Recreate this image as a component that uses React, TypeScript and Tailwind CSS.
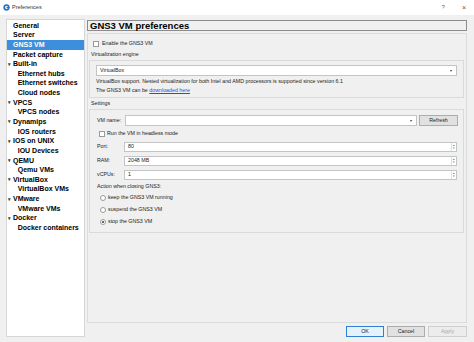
import React from "react";

const font = { fontFamily: '"Liberation Sans", Arial, sans-serif' };

type TreeItem = { label: string; level: 0 | 1; parent?: boolean; selected?: boolean };

const tree: TreeItem[] = [
  { label: "General", level: 0 },
  { label: "Server", level: 0 },
  { label: "GNS3 VM", level: 0, selected: true },
  { label: "Packet capture", level: 0 },
  { label: "Built-in", level: 0, parent: true },
  { label: "Ethernet hubs", level: 1 },
  { label: "Ethernet switches", level: 1 },
  { label: "Cloud nodes", level: 1 },
  { label: "VPCS", level: 0, parent: true },
  { label: "VPCS nodes", level: 1 },
  { label: "Dynamips", level: 0, parent: true },
  { label: "IOS routers", level: 1 },
  { label: "IOS on UNIX", level: 0, parent: true },
  { label: "IOU Devices", level: 1 },
  { label: "QEMU", level: 0, parent: true },
  { label: "Qemu VMs", level: 1 },
  { label: "VirtualBox", level: 0, parent: true },
  { label: "VirtualBox VMs", level: 1 },
  { label: "VMware", level: 0, parent: true },
  { label: "VMware VMs", level: 1 },
  { label: "Docker", level: 0, parent: true },
  { label: "Docker containers", level: 1 },
];

const Checkbox = () => (
  <span className="w-[6px] h-[6px] border border-[#9a9a9a] bg-white shrink-0" />
);

const Radio = ({ checked }: { checked?: boolean }) => (
  <span className="w-[6px] h-[6px] rounded-full border border-[#9a9a9a] bg-white shrink-0 flex items-center justify-center">
    {checked && <span className="w-[2px] h-[2px] rounded-full bg-[#333]" />}
  </span>
);

const SpinRow = ({ label, value }: { label: string; value: string }) => (
  <div className="flex items-center h-[10px] mt-[4px]">
    <span className="w-[27px] text-[5.3px] text-[#222]">{label}</span>
    <div className="flex-1 h-full border border-[#c4c4c4] bg-white flex items-center pl-[3px] text-[5.3px] text-[#222]">
      <span className="flex-1">{value}</span>
      <span className="w-[5px] h-full border-l border-[#e0e0e0] flex flex-col items-center justify-center text-[3px] leading-[3px] text-[#555]">
        <span>▴</span>
        <span>▾</span>
      </span>
    </div>
  </div>
);

export default function App() {
  return (
    <div
      className="w-[474px] h-[342px] bg-[#f0f0f0] flex flex-col overflow-hidden text-black"
      style={font}
    >
      {/* Title bar */}
      <div className="h-[15px] bg-white flex items-center pl-[3px] pr-[8px] shrink-0">
        <svg width="7" height="7" viewBox="0 0 10 10" className="shrink-0">
          <circle cx="5" cy="5" r="4.5" fill="#2b73c9" />
          <circle cx="5" cy="5" r="2" fill="#fff" />
          <rect x="5" y="4.3" width="4.5" height="1.4" fill="#2b73c9" />
        </svg>
        <span className="ml-[2px] text-[5.5px] text-[#333]">Preferences</span>
        <span className="ml-auto text-[5.5px] text-[#555]">?</span>
        <span className="ml-[17px] text-[7px] text-[#555] leading-none">×</span>
      </div>

      {/* Body */}
      <div className="flex pl-[6px] pt-[4px]">
        {/* Tree */}
        <div className="w-[79px] h-[318px] bg-white border border-[#d6d6d6] pt-[1px] shrink-0">
          {tree.map((t) => (
            <div
              key={t.label}
              className={`h-[9.65px] flex items-center text-[7px] font-bold whitespace-nowrap ${
                t.selected ? "bg-[#3b8fdc] text-white" : "text-black"
              }`}
            >
              <span className="w-[6px] pl-[0.5px] text-[5px] text-[#444] text-left shrink-0">
                {t.parent ? "▾" : ""}
              </span>
              <span className={t.level === 1 ? "ml-[4.7px]" : "ml-0"}>{t.label}</span>
            </div>
          ))}
        </div>

        {/* Right side */}
        <div className="ml-[2px] w-[380px] pt-[1px] flex flex-col">
          <div className="h-[11px] border border-[#8c8c8c] flex items-center pl-[2px] text-[9.5px] font-bold leading-none">
            GNS3 VM preferences
          </div>

          <div className="mt-[2px] h-[290px] border border-[#dcdcdc] flex flex-col pl-[1px] pr-[2px]">
            <div className="flex items-center h-[8px] mt-[6px] pl-[4px] gap-[3px]">
              <Checkbox />
              <span className="text-[5.3px] text-[#222]">Enable the GNS3 VM</span>
            </div>

            <div className="h-[8px] mt-[3px] pl-[2px] flex items-center text-[5.3px] text-[#222]">
              Virtualization engine
            </div>

            <div className="mt-[1px] h-[38px] border border-[#dadada] px-[6px]">
              <div className="mt-[4px] h-[11px] border border-[#c4c4c4] bg-white flex items-center pl-[3px] pr-[4px] text-[5.3px] text-[#222]">
                <span className="flex-1">VirtualBox</span>
                <span className="text-[4px] text-[#444]">▾</span>
              </div>
              <div className="mt-[1px] text-[5.3px] leading-[9px] text-[#222] whitespace-nowrap">
                <div>
                  VirtualBox support. Nested virtualization for both Intel and AMD processors is supported since version 6.1
                </div>
                <div>
                  The GNS3 VM can be <span className="text-[#1a55d8] underline">downloaded here</span>
                </div>
              </div>
            </div>

            <div className="h-[8px] mt-[2px] pl-[2px] flex items-center text-[5.3px] text-[#222]">
              Settings
            </div>

            <div className="mt-[1px] h-[124px] border border-[#dadada] pl-[7px] pr-[5px]">
              <div className="flex items-center h-[11px] mt-[5px]">
                <span className="w-[28px] text-[5.3px] text-[#222]">VM name:</span>
                <div className="flex-1 h-full border border-[#c4c4c4] bg-white flex items-center justify-end pr-[4px] text-[4px] text-[#444]">
                  ▾
                </div>
                <div className="ml-[2px] w-[39px] h-full border border-[#adadad] bg-[#e1e1e1] flex items-center justify-center text-[5.3px] text-[#222]">
                  Refresh
                </div>
              </div>

              <div className="flex items-center h-[8px] mt-[4px] pl-[2px] gap-[2px]">
                <Checkbox />
                <span className="text-[5.3px] text-[#222]">Run the VM in headless mode</span>
              </div>

              <div className="pr-[1px]">
                <SpinRow label="Port:" value="80" />
                <SpinRow label="RAM:" value="2048 MB" />
                <SpinRow label="vCPUs:" value="1" />
              </div>

              <div className="h-[8px] mt-[3px] flex items-center text-[5.3px] text-[#222]">
                Action when closing GNS3:
              </div>
              {[
                { l: "keep the GNS3 VM running", mt: "mt-[3px]" },
                { l: "suspend the GNS3 VM", mt: "mt-[4px]" },
                { l: "stop the GNS3 VM", mt: "mt-[4px]", c: true },
              ].map((r) => (
                <div key={r.l} className={`flex items-center h-[8px] ${r.mt} pl-[3px] gap-[2px]`}>
                  <Radio checked={r.c} />
                  <span className="text-[5.3px] text-[#222]">{r.l}</span>
                </div>
              ))}
            </div>
          </div>

          {/* Buttons */}
          <div className="mt-[3px] h-[11px] flex justify-end gap-[3px]">
            <div className="w-[38px] h-full border border-[#2f7fd3] bg-[#e5f1fb] flex items-center justify-center text-[5.3px] text-[#222]">
              OK
            </div>
            <div className="w-[38px] h-full border border-[#adadad] bg-[#e1e1e1] flex items-center justify-center text-[5.3px] text-[#222]">
              Cancel
            </div>
            <div className="w-[39px] h-full border border-[#cfcfcf] bg-[#ececec] flex items-center justify-center text-[5.3px] text-[#a8a8a8]">
              Apply
            </div>
          </div>
        </div>
      </div>
    </div>
  );
}
